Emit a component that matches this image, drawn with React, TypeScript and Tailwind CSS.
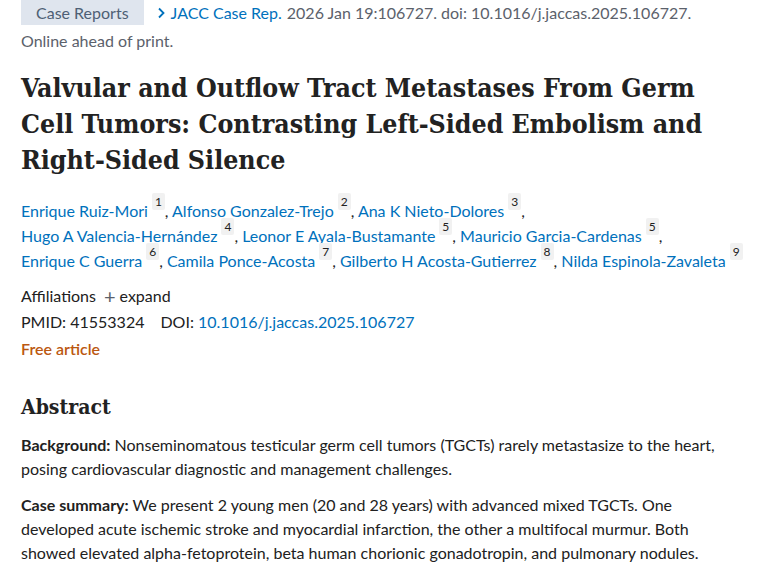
const AUTHORS: [string, string][] = [
  ['Enrique Ruiz-Mori', '1'],
  ['Alfonso Gonzalez-Trejo', '2'],
  ['Ana K Nieto-Dolores', '3'],
  ['Hugo A Valencia-Hernández', '4'],
  ['Leonor E Ayala-Bustamante', '5'],
  ['Mauricio Garcia-Cardenas', '5'],
  ['Enrique C Guerra', '6'],
  ['Camila Ponce-Acosta', '7'],
  ['Gilberto H Acosta-Gutierrez', '8'],
  ['Nilda Espinola-Zavaleta', '9'],
];

// rows of authors, as wrapped in the reference
const ROWS = [[0, 1, 2], [3, 4, 5], [6, 7, 8, 9]];

export default function App() {
  return (
    <div className="w-[760px] h-[570px] overflow-hidden bg-white font-['Lato','Noto_Sans',sans-serif] text-[16px] text-[#212121]">
      <div className="pl-[21px]">
        {/* Citation header */}
        <div className="flex items-center h-[25px]">
          <span className="bg-[#dfe5ee] text-[#4e5f75] px-[15px] h-[25px] flex items-center">Case Reports</span>
          <span className="ml-[12px] flex items-center">
            <svg className="w-[10px] h-[12px] mr-[5px]" viewBox="0 0 10 12" fill="none" stroke="#0071bc" strokeWidth={1.8}>
              <path d="M3 1.5 L7.5 6 L3 10.5" />
            </svg>
            <span className="text-[#0071bc]">JACC Case Rep.</span>
            <span className="text-[#5b616b] ml-[5px]">2026 Jan 19:106727. doi: 10.1016/j.jaccas.2025.106727.</span>
          </span>
        </div>
        <p className="text-[#5b616b] mt-[4px] leading-[24px]">Online ahead of print.</p>

        {/* Title */}
        <h1 className="mt-[17px] font-['DejaVu_Serif_Condensed','DejaVu_Serif',serif] font-bold text-[26.5px] leading-[36px] text-[#222] max-w-[700px]">
          Valvular and Outflow Tract Metastases From Germ Cell Tumors: Contrasting Left-Sided Embolism and Right-Sided Silence
        </h1>

        {/* Authors */}
        <div className="mt-[20px] leading-[25px]">
          {ROWS.map((row, r) => (
            <div key={r} className="whitespace-nowrap">
              {row.map((i) => (
                <span key={i}>
                  <span className="text-[#0071bc]">{AUTHORS[i][0]}</span>
                  <sup className="ml-[4px] bg-[#f1f1f1] text-[#212121] text-[12px] px-[3px] py-[1px] rounded-[2px] align-[5px]">{AUTHORS[i][1]}</sup>
                  {i < AUTHORS.length - 1 && ', '}
                </span>
              ))}
            </div>
          ))}
        </div>

        {/* Meta */}
        <div className="mt-[10px] flex items-center gap-[8px] leading-[26px]">
          <span>Affiliations</span>
          <span className="flex items-center gap-[4px]">
            <span className="text-[#5b616b] text-[20px] leading-none">+</span>expand
          </span>
        </div>
        <div className="leading-[26px]">
          PMID: 41553324<span className="ml-[16px]">DOI: </span>
          <span className="text-[#0071bc]">10.1016/j.jaccas.2025.106727</span>
        </div>
        <div className="leading-[28px] text-[#bb5810] font-semibold">Free article</div>

        {/* Abstract */}
        <h2 className="mt-[29px] font-['DejaVu_Serif_Condensed','DejaVu_Serif',serif] font-bold text-[21px] leading-[30px] text-[#222]">Abstract</h2>
        <p className="mt-[11px] leading-[24px] pr-[20px]">
          <b>Background:</b> Nonseminomatous testicular germ cell tumors (TGCTs) rarely metastasize to the heart, posing cardiovascular diagnostic and management challenges.
        </p>
        <p className="mt-[12px] leading-[24px] pr-[20px]">
          <b>Case summary:</b> We present 2 young men (20 and 28 years) with advanced mixed TGCTs. One developed acute ischemic stroke and myocardial infarction, the other a multifocal murmur. Both showed elevated alpha-fetoprotein, beta human chorionic gonadotropin, and pulmonary nodules.
        </p>
      </div>
    </div>
  );
}
